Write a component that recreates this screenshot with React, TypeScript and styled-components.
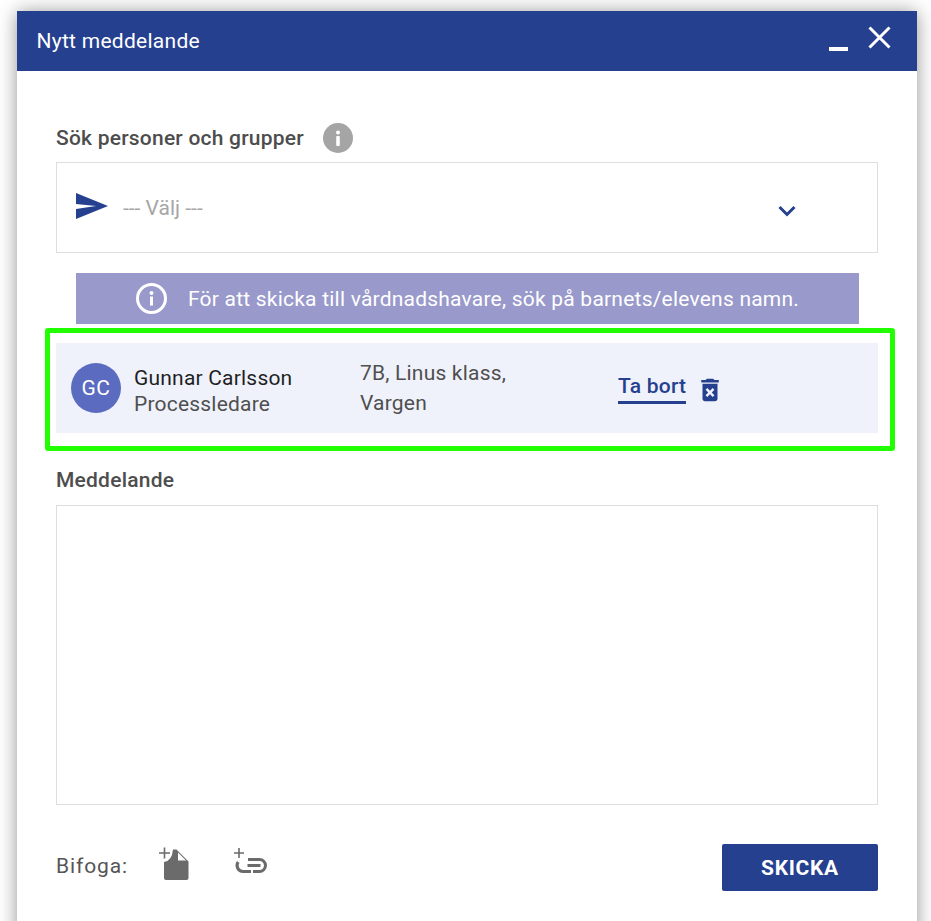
import styled, { createGlobalStyle } from 'styled-components';
import { MdDeleteForever } from 'react-icons/md';

const GlobalStyle = createGlobalStyle`
    html, body {
        margin: 0;
        padding: 0;
        height: 100%;
        background: #fff;
        overflow: hidden;
        font-family: Roboto, "Liberation Sans", sans-serif;
    }
`

const Page = styled.div`
    padding: 11px 14px 0 17px;
    height: 921px;
    box-sizing: border-box;
    overflow: hidden;
`

const Modal = styled.div`
    position: relative;
    width: 900px;
    height: 960px;
    background: #fff;
    box-shadow: 0 1px 18px rgba(0, 0, 0, 0.42);
`

const Header = styled.header`
    height: 60px;
    background: #25408f;
    color: #fff;
    display: flex;
    align-items: center;
    justify-content: space-between;
    padding: 0 26px 0 19.5px;
`

const Title = styled.h1`
    margin: 0;
    font-size: 21px;
    font-weight: 400;
    letter-spacing: 0.27px;
    color: #fff;
`

const HeaderIcons = styled.div`
    display: flex;
    align-items: flex-start;
    gap: 20px;
    height: 60px;
`

const IconButton = styled.button<{ $top: number }>`
    border: 0;
    background: none;
    padding: 0;
    margin-top: ${p => p.$top}px;
    display: block;
    line-height: 0;
`

const Body = styled.div`
    padding: 52px 39px 0;
`

const LabelRow = styled.div`
    display: flex;
    align-items: center;
    gap: 19px;
    height: 30px;
    margin-bottom: 9px;
`

const Label = styled.label`
    font-size: 21px;
    font-weight: 500;
    color: #4d4d4d;
    letter-spacing: 0.22px;
    line-height: 24px;
`

const Select = styled.div`
    height: 91px;
    box-sizing: border-box;
    border: 1px solid #dedede;
    display: flex;
    align-items: center;
    padding: 0 81px 0 19px;
`

const SendIcon = styled.svg`
    margin-top: -3px;
`

const Placeholder = styled.span`
    flex: 1;
    margin-left: 15px;
    font-size: 21px;
    color: #a6a6a6;
`

const ChevronIcon = styled.svg`
    margin-top: 7px;
`

const Banner = styled.div`
    margin: 20px 19px 19px 20px;
    height: 51px;
    background: #9999cb;
    color: #fff;
    display: flex;
    align-items: center;
    justify-content: center;
    gap: 21px;
    font-size: 21px;
    letter-spacing: 0.22px;
`

const Recipient = styled.div`
    height: 90px;
    background: #eff2fb;
    display: flex;
    align-items: center;
    padding-left: 15px;
    margin-bottom: 35px;
`

const Avatar = styled.div`
    width: 50px;
    height: 50px;
    flex: none;
    border-radius: 50%;
    background: #5b6bc0;
    color: #fff;
    font-size: 21px;
    letter-spacing: 0.5px;
    display: flex;
    align-items: center;
    justify-content: center;
`

const NameCol = styled.div`
    width: 226px;
    margin-left: 13px;
    margin-top: 6px;
    font-size: 21px;
    line-height: 26px;
    letter-spacing: 0.2px;
`

const Name = styled.div`
    color: #1f1f1f;
`

const Role = styled.div`
    color: #4f4f4f;
`

const ClassCol = styled.div`
    width: 258px;
    font-size: 21px;
    line-height: 30px;
    letter-spacing: 0.2px;
    color: #4f4f4f;
`

const RemoveLink = styled.a`
    font-size: 21px;
    font-weight: 500;
    letter-spacing: 0.25px;
    color: #25408f;
    line-height: 26px;
    padding-bottom: 2px;
    border-bottom: 3px solid #25408f;
`

const RemoveIcon = styled(MdDeleteForever)`
    color: #25408f;
    margin-left: 9px;
    margin-top: 4px;
`

const Highlight = styled.div`
    position: absolute;
    left: 28px;
    top: 317px;
    width: 850px;
    height: 123px;
    box-sizing: border-box;
    border: 5px solid #22ff00;
    border-radius: 3px;
    pointer-events: none;
`

const MessageLabel = styled(Label)`
    display: block;
    margin-bottom: 13px;
`

const MessageBox = styled.div`
    height: 300px;
    box-sizing: border-box;
    border: 1px solid #dedede;
`

const Footer = styled.div`
    margin-top: 39px;
    display: flex;
    align-items: flex-start;
    justify-content: space-between;
`

const Attachments = styled.div`
    display: flex;
    align-items: flex-start;
`

const AttachLabel = styled.span`
    font-size: 21px;
    line-height: 24px;
    margin-top: 10px;
    letter-spacing: 0.9px;
    color: #555;
    width: 103px;
`

const FileIcon = styled.svg`
    display: block;
    margin-top: 3px;
`

const LinkIcon = styled.svg`
    display: block;
    margin-top: 3px;
    margin-left: 45px;
`

const SendButton = styled.button`
    width: 156px;
    height: 47px;
    border: 0;
    border-radius: 2px;
    background: #25408f;
    color: #fff;
    font-family: Roboto, sans-serif;
    font-size: 21px;
    font-weight: 700;
    letter-spacing: 0.7px;
`

export default function App() {
    return (
        <Page>
            <GlobalStyle />
            <Modal>
                <Header>
                    <Title>Nytt meddelande</Title>
                    <HeaderIcons>
                        <IconButton $top={36}>
                            <svg width="19" height="5"><rect width="19" height="4" fill="#fff" /></svg>
                        </IconButton>
                        <IconButton $top={15}>
                            <svg width="23" height="23" viewBox="0 0 23 23">
                                <path d="M1.5 1.5 L21.5 21.5 M21.5 1.5 L1.5 21.5" stroke="#fff" strokeWidth="3" fill="none" />
                            </svg>
                        </IconButton>
                    </HeaderIcons>
                </Header>
                <Body>
                    <LabelRow>
                        <Label>Sök personer och grupper</Label>
                        <svg width="30" height="30" viewBox="0 0 30 30">
                            <circle cx="15" cy="15" r="15" fill="#a5a5a5" />
                            <circle cx="15" cy="9.5" r="2" fill="#fff" />
                            <rect x="13.2" y="13" width="3.6" height="10" rx="1" fill="#fff" />
                        </svg>
                    </LabelRow>
                    <Select>
                        <SendIcon width="32" height="26" viewBox="0 0 32 26">
                            <path d="M0 0 L32 13 L0 26 L0 16 L20 13 L0 11 Z" fill="#25408f" />
                        </SendIcon>
                        <Placeholder>--- Välj ---</Placeholder>
                        <ChevronIcon width="18" height="12" viewBox="0 0 18 12">
                            <path d="M1.5 2 L9 9.5 L16.5 2" stroke="#25408f" strokeWidth="3" fill="none" />
                        </ChevronIcon>
                    </Select>
                    <Banner>
                        <svg width="31" height="31" viewBox="0 0 31 31">
                            <circle cx="15.5" cy="15.5" r="14" fill="none" stroke="#fff" strokeWidth="3" />
                            <circle cx="15.5" cy="10" r="2" fill="#fff" />
                            <rect x="14" y="13.5" width="3" height="9" fill="#fff" />
                        </svg>
                        För att skicka till vårdnadshavare, sök på barnets/elevens namn.
                    </Banner>
                    <Recipient>
                        <Avatar>GC</Avatar>
                        <NameCol>
                            <Name>Gunnar Carlsson</Name>
                            <Role>Processledare</Role>
                        </NameCol>
                        <ClassCol>7B, Linus klass,<br />Vargen</ClassCol>
                        <RemoveLink>Ta bort</RemoveLink>
                        <RemoveIcon size={30} />
                    </Recipient>
                    <MessageLabel>Meddelande</MessageLabel>
                    <MessageBox />
                    <Footer>
                        <Attachments>
                            <AttachLabel>Bifoga:</AttachLabel>
                            <FileIcon width="30" height="34" viewBox="0 0 30 34" fill="#6b6b6b">
                                <path d="M4.7 5.2 H6.3 V0.5 H4.7 Z M0 5.2 H11 V6.8 H0 Z M4.7 6.8 H6.3 V11.5 H4.7 Z" />
                                <path d="M17.5 2.5 L29.5 14.5 V31 Q29.5 33 27.5 33 H7 Q5 33 5 31 V15 Q13 14 14 2.5 Z" />
                                <path d="M19 5.5 L27 13.5 H19 Z" fill="#fff" />
                            </FileIcon>
                            <LinkIcon width="34" height="28" viewBox="0 0 34 28" fill="none" stroke="#6b6b6b" strokeWidth="3">
                                <path d="M5 1 V11 M0 6 H10" strokeWidth="1.6" />
                                <path d="M14 12.5 H25.5 A6 6 0 0 1 25.5 24.5 H19" />
                                <path d="M4.2 15 A6 6 0 0 0 9 24.5 H17" />
                                <path d="M13.5 18.5 H26.5" />
                            </LinkIcon>
                        </Attachments>
                        <SendButton>SKICKA</SendButton>
                    </Footer>
                </Body>
                <Highlight />
            </Modal>
        </Page>
    );
}
